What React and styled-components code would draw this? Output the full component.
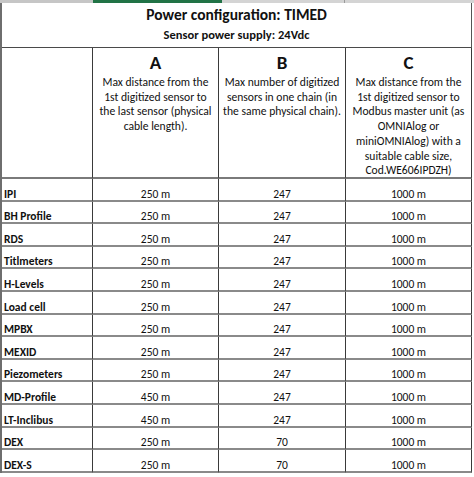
import React from "react";
import styled, { createGlobalStyle } from "styled-components";

const GlobalStyle = createGlobalStyle`
    html, body {
        margin: 0;
        padding: 0;
        background: #ffffff;
    }
    body {
        font-family: Carlito, Calibri, Lato, "Liberation Sans", sans-serif;
        color: #111;
    }
`;

const Page = styled.div`
    width: 474px;
    height: 477px;
    background: #fff;
    overflow: hidden;
`;

const Strip = styled.div`
    display: flex;
    height: 3px;
`;

const StripPart = styled.div`
    width: ${p => p.w}px;
    flex: ${p => (p.w ? "none" : 1)};
    background: ${p => p.color};
    border-right: ${p => (p.sep ? "1px solid #9a9a9a" : "none")};
`;

const Sheet = styled.div`
    width: 470px;
    display: grid;
    grid-template-columns: 91px 126px 127px 126px;
    grid-template-rows: 45px 131px repeat(13, 22.6px);
    border-left: 2px solid #6e6e6e;
`;

const TitleCell = styled.div`
    grid-column: 1 / span 4;
    display: flex;
    flex-direction: column;
    align-items: center;
    padding-top: 2px;
    border-right: 1px solid #555;
    border-bottom: 1px solid #4a4a4a;
`;

const Title = styled.div`
    font-size: 15.5px;
    font-weight: 700;
    line-height: 20px;
`;

const Subtitle = styled.div`
    font-size: 12.5px;
    font-weight: 700;
    line-height: 17px;
    margin-top: 1px;
`;

const Cell = styled.div`
    display: flex;
    align-items: flex-end;
    justify-content: ${p => (p.left ? "flex-start" : "center")};
    padding: 0 0 0 ${p => (p.left ? "2px" : "0")};
    font-size: 11.5px;
    font-weight: ${p => (p.left ? 700 : 400)};
    line-height: 11px;
    border-right: 1px solid #3a3a3a;
    border-bottom: 2px solid #8a8a8a;
    white-space: nowrap;
`;

const HeadCell = styled.div`
    display: flex;
    flex-direction: column;
    align-items: center;
    padding-top: 4px;
    border-right: 1px solid #3a3a3a;
    border-bottom: 2px solid #7a7a7a;
`;

const Letter = styled.div`
    font-size: 19px;
    font-weight: 700;
    line-height: 22px;
    margin-bottom: 1px;
`;

const Desc = styled.div`
    font-size: 11.6px;
    line-height: 14.7px;
    text-align: center;
    white-space: nowrap;
`;

const headers = [
    {
        key: "A",
        lines: [
            "Max distance from the",
            "1st digitized sensor to",
            "the last sensor (physical",
            "cable length).",
        ],
    },
    {
        key: "B",
        lines: [
            "Max number of digitized",
            "sensors in one chain (in",
            "the same physical chain).",
        ],
    },
    {
        key: "C",
        lines: [
            "Max distance from the",
            "1st digitized sensor to",
            "Modbus master unit (as",
            "OMNIAlog or",
            "miniOMNIAlog) with a",
            "suitable cable size,",
            "Cod.WE606IPDZH)",
        ],
    },
];

const rows = [
    ["IPI", "250 m", "247", "1000 m"],
    ["BH Profile", "250 m", "247", "1000 m"],
    ["RDS", "250 m", "247", "1000 m"],
    ["Titlmeters", "250 m", "247", "1000 m"],
    ["H-Levels", "250 m", "247", "1000 m"],
    ["Load cell", "250 m", "247", "1000 m"],
    ["MPBX", "250 m", "247", "1000 m"],
    ["MEXID", "250 m", "247", "1000 m"],
    ["Piezometers", "250 m", "247", "1000 m"],
    ["MD-Profile", "450 m", "247", "1000 m"],
    ["LT-Inclibus", "450 m", "247", "1000 m"],
    ["DEX", "250 m", "70", "1000 m"],
    ["DEX-S", "250 m", "70", "1000 m"],
];

export default function App() {
    return (
        <Page>
            <GlobalStyle />
            <Strip>
                <StripPart w={93} color="#c6c6c6" />
                <StripPart w={129} color="#217346" />
                <StripPart w={122} color="#d4d4d4" sep />
                <StripPart color="#d4d4d4" />
            </Strip>
            <Sheet>
                <TitleCell>
                    <Title>Power configuration: TIMED</Title>
                    <Subtitle>Sensor power supply: 24Vdc</Subtitle>
                </TitleCell>

                <HeadCell />
                {headers.map(h => (
                    <HeadCell key={h.key}>
                        <Letter>{h.key}</Letter>
                        {h.lines.map(l => (
                            <Desc key={l}>{l}</Desc>
                        ))}
                    </HeadCell>
                ))}

                {rows.map(r => (
                    <React.Fragment key={r[0]}>
                        <Cell left>{r[0]}</Cell>
                        <Cell>{r[1]}</Cell>
                        <Cell>{r[2]}</Cell>
                        <Cell>{r[3]}</Cell>
                    </React.Fragment>
                ))}
            </Sheet>
        </Page>
    );
}
